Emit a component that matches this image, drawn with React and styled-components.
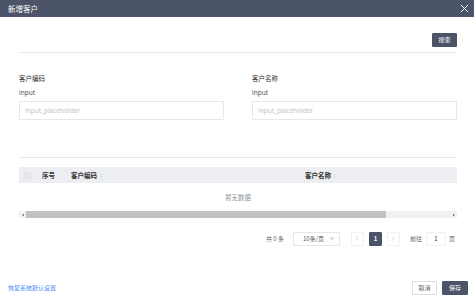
import React from "react";
import styled, { createGlobalStyle } from "styled-components";

const Global = createGlobalStyle`
  html, body { margin: 0; padding: 0; background: #fff; }
  body { font-family: "Noto Sans CJK SC", "Noto Sans", sans-serif; }
  * { box-sizing: border-box; }
`;

const Dialog = styled.div`
  width: 474px;
  height: 302px;
  display: flex;
  flex-direction: column;
  background: #fff;
  overflow: hidden;
`;

const Header = styled.div`
  height: 17px;
  flex: none;
  background: #4b5468;
  color: #fff;
  display: flex;
  align-items: center;
  justify-content: space-between;
  padding: 0 5px 0 8px;
  font-size: 7.5px;
  line-height: 1;
`;

const Close = styled.svg`
  width: 9px;
  height: 9px;
  display: block;
`;

const Body = styled.div`
  flex: 1;
  padding: 16px 17px 0 19px;
  display: flex;
  flex-direction: column;
`;

const Toolbar = styled.div`
  display: flex;
  justify-content: flex-end;
  padding-bottom: 5px;
  border-bottom: 1px solid #e4e6ea;
`;

const Button = styled.button`
  height: ${(p) => p.$h || 14}px;
  min-width: ${(p) => p.$w || 25}px;
  padding: 0 5px;
  border-radius: 1px;
  font-family: inherit;
  font-size: 6px;
  line-height: 1;
  cursor: pointer;
  border: 1px solid ${(p) => (p.$primary ? "#4b5468" : "#dcdfe6")};
  background: ${(p) => (p.$primary ? "#4b5468" : "#fff")};
  color: ${(p) => (p.$primary ? "#fff" : "#606266")};
  margin-right: ${(p) => p.$mr || 0}px;
`;

const Form = styled.div`
  display: grid;
  grid-template-columns: 205px 205px;
  column-gap: 28px;
  padding-top: 21px;
  padding-bottom: 37px;
  border-bottom: 1px solid #e4e6ea;
`;

const Field = styled.div`
  display: flex;
  flex-direction: column;
`;

const Label = styled.div`
  font-size: 6.5px;
  color: #333;
  line-height: 8px;
  height: 8px;
`;

const SubLabel = styled.div`
  font-size: 6.5px;
  color: #555;
  line-height: 8px;
  margin-top: 7px;
  font-family: "Noto Sans", sans-serif;
`;

const Input = styled.div`
  margin-top: 4px;
  height: 19px;
  border: 1px solid #e6e8ec;
  border-radius: 1px;
  display: flex;
  align-items: center;
  padding-left: 5px;
  font-size: 6.5px;
  color: #c0c4cc;
  font-family: "Noto Sans", sans-serif;
`;

const Table = styled.div`
  margin-top: 9px;
  display: flex;
  flex-direction: column;
`;

const HeadRow = styled.div`
  height: 16px;
  background: #eceef2;
  display: flex;
  align-items: center;
  font-size: 6.5px;
  font-weight: bold;
  color: #333;
`;

const Cell = styled.div`
  width: ${(p) => p.$w}px;
  padding-left: ${(p) => p.$pl || 0}px;
  display: flex;
  align-items: center;
  gap: 3px;
  flex: none;
`;

const Check = styled.span`
  width: 7px;
  height: 7px;
  background: #e4e7f0;
  border: 1px solid #e0e3ec;
  border-radius: 1px;
  display: block;
`;

const Sort = styled.span`
  display: inline-flex;
  flex-direction: column;
  gap: 1px;
  &::before, &::after {
    content: "";
    width: 0;
    height: 0;
    border-left: 1.5px solid transparent;
    border-right: 1.5px solid transparent;
  }
  &::before { border-bottom: 1.5px solid #c0c4cc; }
  &::after { border-top: 1.5px solid #c0c4cc; }
`;

const Empty = styled.div`
  height: 28px;
  display: flex;
  align-items: center;
  justify-content: center;
  font-size: 6.5px;
  color: #909399;
`;

const Scrollbar = styled.div`
  height: 7px;
  display: flex;
  align-items: center;
  background: #f1f1f1;
`;

const Arrow = styled.span`
  width: 7px;
  flex: none;
  display: flex;
  justify-content: center;
  &::after {
    content: "";
    border-top: 1.5px solid transparent;
    border-bottom: 1.5px solid transparent;
    ${(p) => (p.$dir === "left" ? "border-right: 2px solid #555;" : "border-left: 2px solid #555;")}
  }
`;

const Thumb = styled.div`
  width: 360px;
  height: 7px;
  background: #c1c1c1;
`;

const Track = styled.div`
  flex: 1;
`;

const Pager = styled.div`
  display: flex;
  align-items: center;
  justify-content: flex-end;
  margin-top: 13px;
  padding-right: 2px;
  font-size: 6px;
  color: #606266;
  height: 15px;
`;

const PagerText = styled.span`
  margin-right: ${(p) => p.$mr || 0}px;
`;

const Select = styled.div`
  width: 47px;
  height: 14px;
  border: 1px solid #e4e6ea;
  border-radius: 1px;
  display: flex;
  align-items: center;
  justify-content: space-between;
  padding: 0 6px 0 9px;
  margin-right: 11px;
  color: #555;
`;

const Caret = styled.span`
  width: 3px;
  height: 3px;
  border-right: 1px solid #c0c4cc;
  border-bottom: 1px solid #c0c4cc;
  transform: rotate(45deg) translateY(-1px);
`;

const PageBtn = styled.div`
  width: 13px;
  height: 14px;
  border: 1px solid ${(p) => (p.$active ? "#4b5468" : "#f0f1f4")};
  background: ${(p) => (p.$active ? "#4b5468" : "#fff")};
  color: ${(p) => (p.$active ? "#fff" : "#c0c4cc")};
  font-weight: ${(p) => (p.$active ? "bold" : "normal")};
  display: flex;
  align-items: center;
  justify-content: center;
  border-radius: 1px;
  margin-right: ${(p) => p.$mr || 0}px;
  font-size: 6px;
`;

const JumpInput = styled.div`
  width: 20px;
  height: 14px;
  border: 1px solid #f0f1f4;
  display: flex;
  align-items: center;
  justify-content: center;
  margin: 0 3px 0 4px;
  color: #333;
`;

const Footer = styled.div`
  height: 26px;
  flex: none;
  display: flex;
  align-items: center;
  justify-content: space-between;
  padding: 0 6px 3px 8px;
`;

const Link = styled.a`
  font-size: 6px;
  color: #4a8af4;
  text-decoration: none;
`;

const Actions = styled.div`
  display: flex;
`;

const ChevronL = () => (
  <svg width="4" height="5" viewBox="0 0 4 6"><path d="M3 0.5 L1 3 L3 5.5" stroke="#c0c4cc" fill="none" strokeWidth="0.8" /></svg>
);
const ChevronR = () => (
  <svg width="4" height="5" viewBox="0 0 4 6"><path d="M1 0.5 L3 3 L1 5.5" stroke="#c0c4cc" fill="none" strokeWidth="0.8" /></svg>
);

export default function App() {
  return (
    <>
      <Global />
      <Dialog>
        <Header>
          <span>新增客户</span>
          <Close viewBox="0 0 10 10">
            <path d="M1 1 L9 9 M9 1 L1 9" stroke="#fff" strokeWidth="1.1" />
          </Close>
        </Header>
        <Body>
          <Toolbar>
            <Button $primary>搜索</Button>
          </Toolbar>
          <Form>
            <Field>
              <Label>客户编码</Label>
              <SubLabel>input</SubLabel>
              <Input>input_placeholder</Input>
            </Field>
            <Field>
              <Label>客户名称</Label>
              <SubLabel>input</SubLabel>
              <Input>input_placeholder</Input>
            </Field>
          </Form>
          <Table>
            <HeadRow>
              <Cell $w={23} $pl={5}><Check /></Cell>
              <Cell $w={29}>序号</Cell>
              <Cell $w={234}>客户编码<Sort /></Cell>
              <Cell $w={120}>客户名称<Sort /></Cell>
            </HeadRow>
            <Empty>暂无数据</Empty>
            <Scrollbar>
              <Arrow $dir="left" />
              <Thumb />
              <Track />
              <Arrow $dir="right" />
            </Scrollbar>
          </Table>
          <Pager>
            <PagerText $mr={9}>共 0 条</PagerText>
            <Select><span>10条/页</span><Caret /></Select>
            <PageBtn $mr={5}><ChevronL /></PageBtn>
            <PageBtn $active $mr={5}>1</PageBtn>
            <PageBtn $mr={10}><ChevronR /></PageBtn>
            <PagerText>前往</PagerText>
            <JumpInput>1</JumpInput>
            <PagerText>页</PagerText>
          </Pager>
        </Body>
        <Footer>
          <Link>恢复系统默认设置</Link>
          <Actions>
            <Button $mr={5} $w={25} $h={14}>取消</Button>
            <Button $primary $w={26} $h={14}>保存</Button>
          </Actions>
        </Footer>
      </Dialog>
    </>
  );
}
